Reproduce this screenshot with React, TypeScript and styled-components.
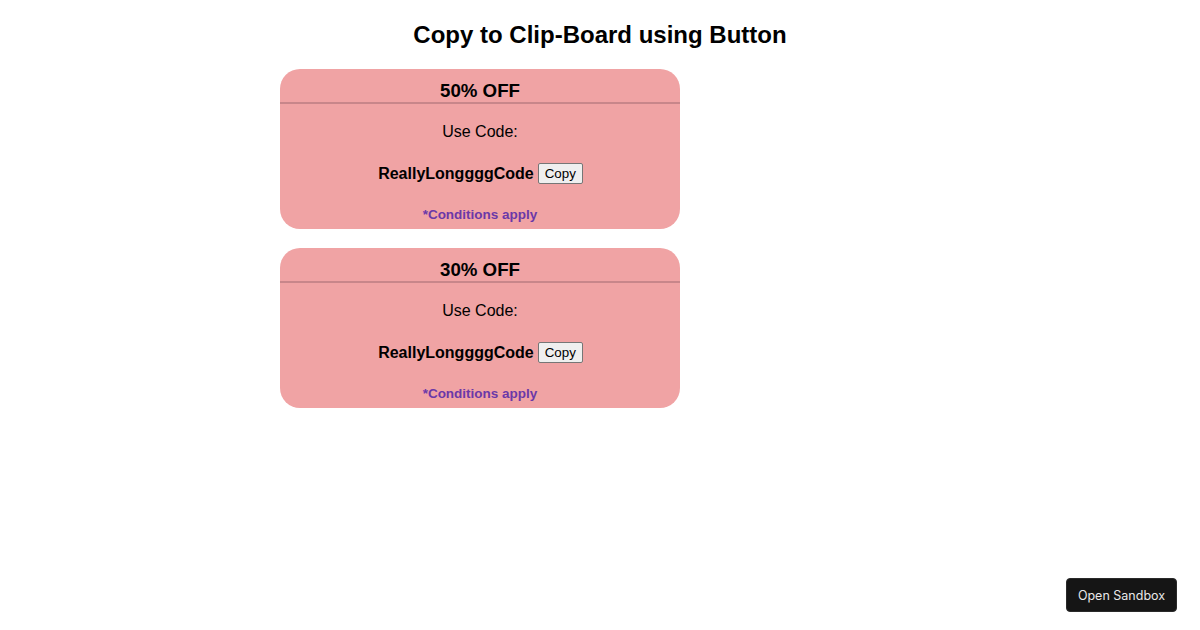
import React from "react";
import styled, { createGlobalStyle } from "styled-components";

const Global = createGlobalStyle`
  html, body { margin: 0; padding: 0; background: #fff; }
  body { font-family: "Liberation Sans", Arial, sans-serif; color: #000; }
`;

const Page = styled.div`
  padding-top: 21px;
`;

const Title = styled.h2`
  margin: 0 0 20px;
  font-size: 24px;
  line-height: 28px;
  font-weight: 700;
  text-align: center;
`;

const List = styled.div`
  width: 400px;
  margin-left: 280px;
  display: flex;
  flex-direction: column;
  gap: 19px;
`;

const Card = styled.div`
  background: #f0a3a4;
  border-radius: 20px;
  height: 160px;
  box-sizing: border-box;
  text-align: center;
`;

const Header = styled.h3`
  margin: 0;
  padding: 11px 0 0;
  font-size: 18.72px;
  line-height: 22px;
  font-weight: 700;
  border-bottom: 2px solid #c8868a;
`;

const Body = styled.div`
  padding-top: 19px;
  display: flex;
  flex-direction: column;
  align-items: center;
`;

const Label = styled.p`
  margin: 0;
  font-size: 16px;
  line-height: 18px;
`;

const CodeRow = styled.div`
  margin-top: 22px;
  margin-left: 1px;
  display: flex;
  align-items: center;
  gap: 4px;
  height: 21px;
`;

const Code = styled.strong`
  font-size: 16px;
  line-height: 18px;
  font-weight: 700;
`;

const CopyButton = styled.button`
  font-family: "Liberation Sans", Arial, sans-serif;
  font-size: 13.33px;
  height: 21px;
  padding: 1px 6px;
  background: #efefef;
  color: #000;
  border: 1px solid #767676;
  border-radius: 2px;
  cursor: pointer;
`;

const Note = styled.p`
  margin: 23px 0 0;
  font-size: 13.5px;
  line-height: 16px;
  font-weight: 700;
  color: #6b38a8;
`;

const SandboxButton = styled.button`
  position: fixed;
  right: 23px;
  bottom: 18px;
  width: 111px;
  height: 34px;
  background: #151515;
  color: #e8e8e8;
  border: 1px solid #2a2a2a;
  border-radius: 4px;
  font-family: "Inter", "Liberation Sans", sans-serif;
  font-size: 12.5px;
  cursor: pointer;
`;

const offers = [
  { discount: "50% OFF", code: "ReallyLonggggCode" },
  { discount: "30% OFF", code: "ReallyLonggggCode" },
];

export default function App() {
  return (
    <Page>
      <Global />
      <Title>Copy to Clip-Board using Button</Title>
      <List>
        {offers.map((o, i) => (
          <Card key={i}>
            <Header>{o.discount}</Header>
            <Body>
              <Label>Use Code:</Label>
              <CodeRow>
                <Code>{o.code}</Code>
                <CopyButton onClick={() => navigator.clipboard?.writeText(o.code)}>Copy</CopyButton>
              </CodeRow>
              <Note>*Conditions apply</Note>
            </Body>
          </Card>
        ))}
      </List>
      <SandboxButton>Open Sandbox</SandboxButton>
    </Page>
  );
}
